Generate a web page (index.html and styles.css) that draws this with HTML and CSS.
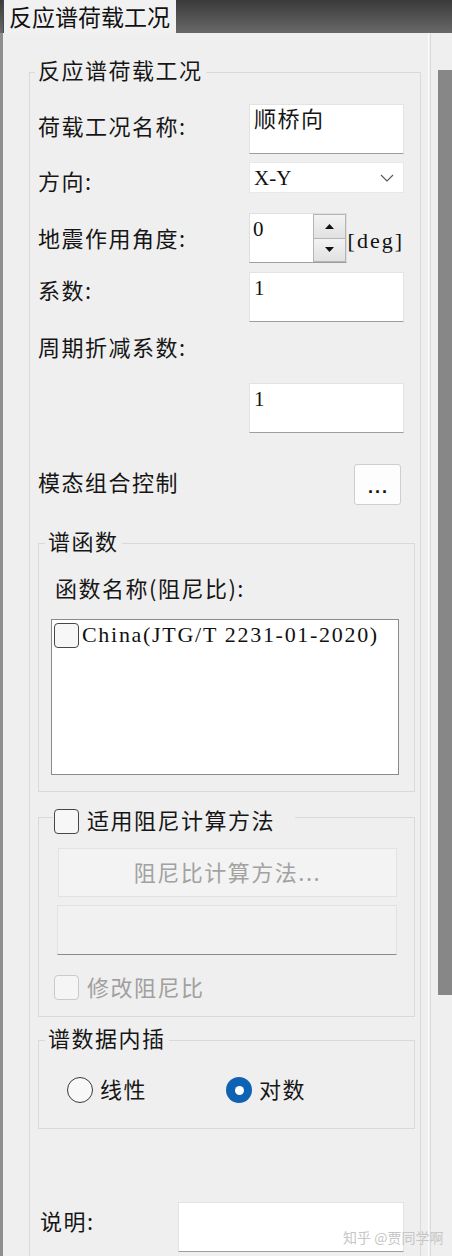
FILE: index.html
```html
<!DOCTYPE html>
<html lang="zh-CN">
<head>
<meta charset="utf-8">
<title>反应谱荷载工况</title>
<link rel="stylesheet" href="styles.css">
</head>
<body>
<div class="topbar"><div class="tab">反应谱荷载工况</div></div>
<div class="main">
  <div class="lstrip"></div>
  <div class="panel">
    <fieldset class="grp grp-main">
      <legend class="lg lg-main"><span>反应谱荷载工况</span></legend>
      <div class="main-body">
        <div class="row r1">
          <span class="lbl">荷载工况名称:</span>
          <div class="field"><span class="cjkval">顺桥向</span></div>
        </div>
        <div class="row r2">
          <span class="lbl">方向:</span>
          <div class="select"><span class="val">X-Y</span>
            <svg class="chev" width="14" height="8" viewBox="0 0 14 8"><path d="M1 1 L7 7 L13 1" fill="none" stroke="#555" stroke-width="1.1"/></svg>
          </div>
        </div>
        <div class="row r3">
          <span class="lbl">地震作用角度:</span>
          <div class="spin-wrap">
            <div class="spin">
              <span class="val spinval">0</span>
              <div class="spin-btns">
                <div class="sbtn"><svg width="9" height="5" viewBox="0 0 9 5"><path d="M0 5 L4.5 0 L9 5 Z" fill="#111"/></svg></div>
                <div class="sbtn"><svg width="9" height="5" viewBox="0 0 9 5"><path d="M0 0 L4.5 5 L9 0 Z" fill="#111"/></svg></div>
              </div>
            </div>
            <span class="unit">[deg]</span>
          </div>
        </div>
        <div class="row r4">
          <span class="lbl">系数:</span>
          <div class="field"><span class="val">1</span></div>
        </div>
        <div class="row r5">
          <span class="lbl">周期折减系数:</span>
        </div>
        <div class="row r5b">
          <span></span>
          <div class="field"><span class="val">1</span></div>
        </div>
        <div class="row r6">
          <span class="lbl">模态组合控制</span>
          <div class="dots">...</div>
        </div>

        <fieldset class="grp sub sub1">
          <legend class="lg lg-sub"><span>谱函数</span></legend>
          <div class="sub1-body">
            <div class="lbl fn-lbl">函数名称(阻尼比):</div>
            <div class="listbox">
              <div class="li"><span class="cb"></span><span class="li-txt">China(JTG/T 2231-01-2020)</span></div>
            </div>
          </div>
        </fieldset>

        <fieldset class="grp sub sub2">
          <legend class="lg-cb"><span class="cb"></span><span class="lbl">适用阻尼计算方法</span></legend>
          <div class="sub2-body">
            <div class="dbtn">阻尼比计算方法...</div>
            <div class="dbox"></div>
            <div class="dcb-row"><span class="cb dis"></span><span class="lbl dis-txt">修改阻尼比</span></div>
          </div>
        </fieldset>

        <fieldset class="grp sub sub3">
          <legend class="lg lg-sub"><span>谱数据内插</span></legend>
          <div class="radios">
            <div class="ritem r-first"><span class="rd"></span><span class="lbl">线性</span></div>
            <div class="ritem"><span class="rd on"></span><span class="lbl">对数</span></div>
          </div>
        </fieldset>

        <div class="row r7">
          <span class="lbl">说明:</span>
          <div class="field desc-field"></div>
        </div>
      </div>
    </fieldset>
  </div>
  <div class="rline"></div>
  <div class="gutter"></div>
  <div class="sbar"><div class="thumb"></div></div>
</div>
<div class="wm">知乎 @贾同学啊</div>
</body>
</html>
```
FILE: styles.css
```css
* { box-sizing: border-box; }
html, body { margin: 0; padding: 0; }
body {
  width: 452px;
  height: 1256px;
  overflow: hidden;
  position: relative;
  background: #efefef;
  font-family: "Noto Sans CJK SC", "Noto Sans", sans-serif;
  color: #161616;
}

.topbar {
  height: 33px;
  display: flex;
  padding-left: 3px;
  background: linear-gradient(#3a3a3a, #686868);
}
.tab {
  width: 173px;
  height: 33px;
  background: #f1f1f1;
  border-left: 1px solid #4a4a4a;
  padding-left: 5px;
  font-size: 23px;
  line-height: 32px;
  color: #111;
  white-space: nowrap;
}

.main { display: flex; height: 1223px; }
.lstrip { width: 3px; background: #8e8e8e; }
.panel { width: 425px; padding: 28px 0 0 26px; }
.rline { width: 3px; border-left: 1px solid #fbfbfb; border-right: 1px solid #dcdcdc; }
.gutter { width: 7px; }
.sbar { width: 14px; padding-top: 37px; }
.thumb { height: 925px; background: #878787; }

/* group boxes */
.grp {
  margin: 0;
  padding: 0;
  min-width: 0;
  border: 1px solid #d9d9d9;
}
.grp-main { width: 392px; height: 1260px; }
.lg {
  padding: 0 3px;
  font-size: 22px;
  line-height: 22px;
  letter-spacing: 1.5px;
  white-space: nowrap;
}
.lg > span { display: block; margin: -3px 0 3px; }
.lg-main { margin-left: 5px; }
.lg-sub { margin-left: 6px; }

.main-body { padding: 0 5px 0 8px; }

.row {
  display: flex;
  justify-content: space-between;
  align-items: center;
  margin-right: 11px;
}
.lbl {
  font-size: 22px;
  line-height: 24px;
  letter-spacing: 1.5px;
  white-space: nowrap;
}

.r1 { margin-top: 21px; height: 50px; }
.r1 .lbl { padding-bottom: 8px; }
.r2 { margin-top: 8px; height: 31px; }
.r2 .lbl { padding-top: 5px; }
.r3 { margin-top: 20px; height: 50px; }
.r3 .lbl { padding-bottom: 2px; }
.r4 { margin-top: 9px; height: 50px; }
.r4 .lbl { padding-bottom: 16px; }
.r5 { margin-top: 1px; height: 50px; }
.r5 .lbl { padding-bottom: 4px; }
.r5b { margin-top: 10px; height: 50px; }
.r6 { margin-top: 31px; height: 41px; }
.r6 .lbl { padding-bottom: 7px; }
.r7 { margin-top: 73px; height: 50px; }
.r7 .lbl { padding-bottom: 14px; margin-left: 2px; }

.field {
  width: 155px;
  height: 50px;
  background: #fff;
  border: 1px solid #e3e3e3;
  border-bottom-color: #9e9e9e;
  padding: 3px 4px 0;
}
.val {
  font-family: "Liberation Serif", serif;
  font-size: 21px;
  line-height: 24px;
  color: #111;
}
.cjkval {
  display: block;
  margin-top: -3px;
  font-size: 22px;
  line-height: 24px;
  letter-spacing: 1.5px;
}

.select {
  width: 155px;
  height: 31px;
  background: #fff;
  border: 1px solid #e8e8e8;
  display: flex;
  align-items: center;
  justify-content: space-between;
  padding: 0 9px 0 4px;
}
.chev { display: block; }

.spin-wrap {
  width: 155px;
  display: flex;
  justify-content: space-between;
  align-items: center;
}
.spin {
  width: 98px;
  height: 50px;
  background: #fff;
  border: 1px solid #dedede;
  border-bottom-color: #9e9e9e;
  display: flex;
}
.spinval { flex: 1; padding: 3px 0 0 3px; }
.spin-btns { width: 33px; display: flex; flex-direction: column; }
.sbtn {
  flex: 1;
  background: linear-gradient(#f3f3f3, #e1e1e1);
  border: 1px solid #b5b5b5;
  display: flex;
  align-items: center;
  justify-content: center;
}
.sbtn + .sbtn { border-top: none; }
.unit {
  font-family: "Liberation Serif", serif;
  font-size: 22px;
  letter-spacing: 2px;
  padding-top: 6px;
  color: #111;
}

.dots {
  width: 47px;
  height: 41px;
  margin-right: 3px;
  background: #fdfdfd;
  border: 1px solid #cecece;
  border-radius: 3px;
  display: flex;
  align-items: flex-end;
  justify-content: center;
  padding: 0 0 8px 2px;
  font-family: "Liberation Sans", sans-serif;
  font-weight: bold;
  font-size: 18px;
  line-height: 18px;
  letter-spacing: 2px;
  color: #111;
}

/* sub groups */
.sub { width: 377px; }
.sub1 { margin-top: 27px; }
.sub1-body { padding: 0 0 16px 12px; }
.fn-lbl { margin: 21px 0 0 4px; }
.listbox {
  margin-top: 20px;
  width: 348px;
  height: 156px;
  background: #fff;
  border: 1px solid #8a8a8a;
  padding: 2px 0 0 2px;
}
.li { display: flex; align-items: center; gap: 3px; }
.li-txt {
  font-family: "Liberation Serif", serif;
  font-size: 22px;
  line-height: 26px;
  letter-spacing: 1.7px;
  color: #111;
  white-space: nowrap;
}
.cb {
  display: block;
  width: 25px;
  height: 25px;
  flex: none;
  border: 1.5px solid #474747;
  border-radius: 4px;
  background: #f7f7f7;
}
.cb.dis { border-color: #cacaca; background: #f5f5f5; }

.sub2 { margin-top: 17px; }
.lg-cb {
  margin-left: 14px;
  padding: 0 20px 0 1px;
  height: 16px;
  display: flex;
  align-items: flex-start;
  gap: 8px;
}
.lg-cb .lbl { margin-top: -2px; }
.sub2-body { padding: 0 0 16px 0; }
.dbtn {
  margin: 23px 0 0 19px;
  width: 339px;
  height: 49px;
  background: #f3f3f3;
  border: 1px solid #e2e2e2;
  display: flex;
  align-items: center;
  justify-content: center;
  padding-bottom: 4px;
  font-size: 22px;
  letter-spacing: 1.5px;
  color: #a2a2a2;
}
.dbox {
  margin: 8px 0 0 18px;
  width: 340px;
  height: 50px;
  background: #f1f1f1;
  border: 1px solid #e2e2e2;
  border-bottom-color: #8a8a8a;
}
.dcb-row {
  margin: 20px 0 0 15px;
  height: 25px;
  display: flex;
  align-items: center;
  gap: 8px;
}
.dis-txt { color: #a0a0a0; padding-bottom: 4px; }

.sub3 { margin-top: 12px; }
.radios {
  display: flex;
  margin: 26px 0 0 28px;
  padding-bottom: 25px;
}
.ritem { display: flex; align-items: center; gap: 7px; height: 26px; }
.ritem .lbl { padding-bottom: 4px; }
.r-first { width: 159px; }
.rd {
  display: block;
  width: 26px;
  height: 26px;
  border-radius: 50%;
  border: 1.5px solid #3a3a3a;
  background: #f8f8f8;
}
.rd.on {
  border: none;
  background: #0d62b4;
  display: flex;
  align-items: center;
  justify-content: center;
}
.rd.on::after {
  content: "";
  width: 9px;
  height: 9px;
  border-radius: 50%;
  background: #fff;
}

.desc-field { width: 226px; }

.wm {
  position: absolute;
  left: 343px;
  top: 1228px;
  font-size: 14px;
  line-height: 18px;
  color: #c6c6c6;
  white-space: nowrap;
}
```
